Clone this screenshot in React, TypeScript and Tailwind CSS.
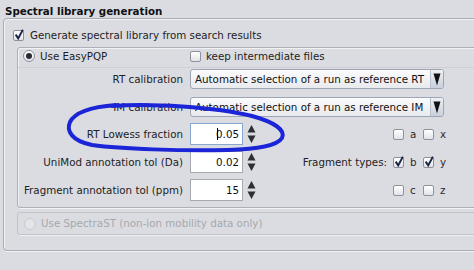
import React from "react";

const Check = ({ checked }: { checked?: boolean }) => (
  <span className="relative inline-flex h-[11px] w-[11px] shrink-0 rounded-[2px] border border-[#8e919a] bg-linear-to-b from-[#ffffff] to-[#e1e3e8]">
    {checked && (
      <svg className="absolute -left-px -top-[2px]" width="12" height="12" viewBox="0 0 12 12">
        <path d="M3.2 6.4 L5.2 9.4 L9.4 1.6" fill="none" stroke="#1c2642" strokeWidth="1.9" strokeLinecap="square" />
      </svg>
    )}
  </span>
);

const Radio = ({ on, disabled }: { on?: boolean; disabled?: boolean }) => (
  <span
    className={
      disabled
        ? "inline-flex h-[12px] w-[12px] shrink-0 items-center justify-center rounded-full border border-[#c9cbd0] bg-[#e3e4e8]"
        : "inline-flex h-[12px] w-[12px] shrink-0 items-center justify-center rounded-full border border-[#8e919a] bg-linear-to-b from-[#ffffff] to-[#e1e3e8]"
    }
  >
    {on && <span className="h-[6px] w-[6px] rounded-full bg-[#262b36]" />}
  </span>
);

const Combo = ({ text }: { text: string }) => (
  <div className="flex h-[20px] w-[254px] items-stretch overflow-hidden rounded-[3px] border border-[#9da6b4] bg-linear-to-b from-[#fbfbfc] to-[#e8eaee]">
    <div className="flex flex-1 items-center pl-[4px] whitespace-nowrap text-[#111]">{text}</div>
    <div className="flex w-[13px] items-center justify-center border-l border-[#b9c1cd] bg-linear-to-b from-[#eef1f5] to-[#c8d0dc]">
      <svg width="8" height="13" viewBox="0 0 8 13">
        <path d="M0.5 0.5 L7.5 0.5 L4 12.5 Z" fill="#111" />
      </svg>
    </div>
  </div>
);

const Spin = () => (
  <svg width="9" height="22" viewBox="0 0 9 22" className="shrink-0">
    <path d="M4.5 2 L8.5 9.5 L0.5 9.5 Z" fill="#2d2f34" />
    <path d="M0.5 12.5 L8.5 12.5 L4.5 20 Z" fill="#2d2f34" />
  </svg>
);

const Pair = ({ label, checked }: { label: string; checked?: boolean }) => (
  <div className="flex w-[30px] items-center gap-[6px]">
    <Check checked={checked} />
    <span className="text-[#2a2a2a]">{label}</span>
  </div>
);

const SpinRow = ({
  label,
  value,
  focused,
  typeLabel,
  pairs,
}: {
  label: string;
  value: string;
  focused?: boolean;
  typeLabel?: string;
  pairs: [string, boolean][];
}) => (
  <div className="flex h-[22px] items-center">
    <div className="w-[165px] text-right whitespace-nowrap text-[#222]">{label}</div>
    <div
      className={
        focused
          ? "ml-[7px] flex h-[22px] w-[53px] items-center justify-end border border-[#88a7d0] bg-white pr-[3px] text-[#111]"
          : "ml-[7px] flex h-[22px] w-[53px] items-center justify-end border border-[#a6a9b0] bg-white pr-[3px] text-[#111]"
      }
    >
      <span className="relative">
        {focused && <span className="absolute left-[1px] top-[0px] h-[12px] w-px bg-black" />}
        {value}
      </span>
    </div>
    <div className="ml-[4px] flex">
      <Spin />
    </div>
    <div className="w-[131px] text-right whitespace-nowrap text-[#222]">{typeLabel}</div>
    <div className="ml-[6px] flex">
      {pairs.map(([l, c]) => (
        <Pair key={l} label={l} checked={c} />
      ))}
    </div>
  </div>
);

export default function App() {
  return (
    <div className="relative h-[270px] w-[474px] overflow-hidden bg-[#dbdce1] font-['DejaVu_Sans',sans-serif] text-[10.3px] leading-[13px] text-[#1e1e1e]">
      <div className="h-[18px] pl-[5px] pt-[4px] font-bold leading-[14px] text-[#111]">Spectral library generation</div>
      <div className="ml-[3px] h-[233px] w-[500px] rounded-[4px] border border-[#a9abb2] shadow-[1px_1px_0_#f1f2f4,inset_1px_1px_0_#f1f2f4]">
        <div className="flex h-[28px] items-center gap-[6px] pl-[9px] pt-[4px]">
          <Check checked />
          <span className="whitespace-nowrap">Generate spectral library from search results</span>
        </div>
        <div className="ml-[13px] h-[161px] rounded-[3px] border border-[#aeb0b7] shadow-[1px_1px_0_#f1f2f4,inset_1px_1px_0_#f1f2f4]">
          <div className="flex h-[20px] items-center border-b border-[#cdcfd4] pb-[3px]">
            <div className="flex w-[172px] items-center gap-[5px] pl-[5px]">
              <Radio on />
              <span>Use EasyPQP</span>
            </div>
            <div className="flex items-center gap-[5px]">
              <Check />
              <span>keep intermediate files</span>
            </div>
          </div>
          <div className="pt-[1px]">
            <div className="flex h-[20px] items-center">
              <div className="w-[165px] text-right whitespace-nowrap text-[#222]">RT calibration</div>
              <div className="ml-[7px]">
                <Combo text="Automatic selection of a run as reference RT" />
              </div>
            </div>
            <div className="mt-[8px] flex h-[20px] items-center">
              <div className="w-[165px] text-right whitespace-nowrap text-[#222]">IM calibration</div>
              <div className="ml-[7px]">
                <Combo text="Automatic selection of a run as reference IM" />
              </div>
            </div>
            <div className="mt-[6px]">
              <SpinRow label="RT Lowess fraction" value="0.05" focused pairs={[["a", false], ["x", false]]} />
            </div>
            <div className="mt-[6px]">
              <SpinRow
                label="UniMod annotation tol (Da)"
                value="0.02"
                typeLabel="Fragment types:"
                pairs={[["b", true], ["y", true]]}
              />
            </div>
            <div className="mt-[6px]">
              <SpinRow label="Fragment annotation tol (ppm)" value="15" pairs={[["c", false], ["z", false]]} />
            </div>
          </div>
        </div>
        <div className="ml-[13px] mt-[4px] flex h-[23px] items-center gap-[5px] rounded-[3px] border border-[#c2c4ca] pl-[6px] text-[#a6a8ae] shadow-[1px_1px_0_#eceef1]">
          <Radio disabled />
          <span className="whitespace-nowrap">Use SpectraST (non-ion mobility data only)</span>
        </div>
      </div>
      <svg className="pointer-events-none absolute left-0 top-0" width="474" height="270" viewBox="0 0 474 270">
        <path
          d="M112 106 C150 103 215 107 252 116 C274 122 286 130 282 138 C277 146 258 149 228 150 C180 151 122 149 92 145 C72 141 66 131 70 122 C75 112 90 107 116 105"
          fill="none"
          stroke="#1b24d6"
          strokeWidth="4"
          strokeLinecap="round"
        />
      </svg>
    </div>
  );
}
